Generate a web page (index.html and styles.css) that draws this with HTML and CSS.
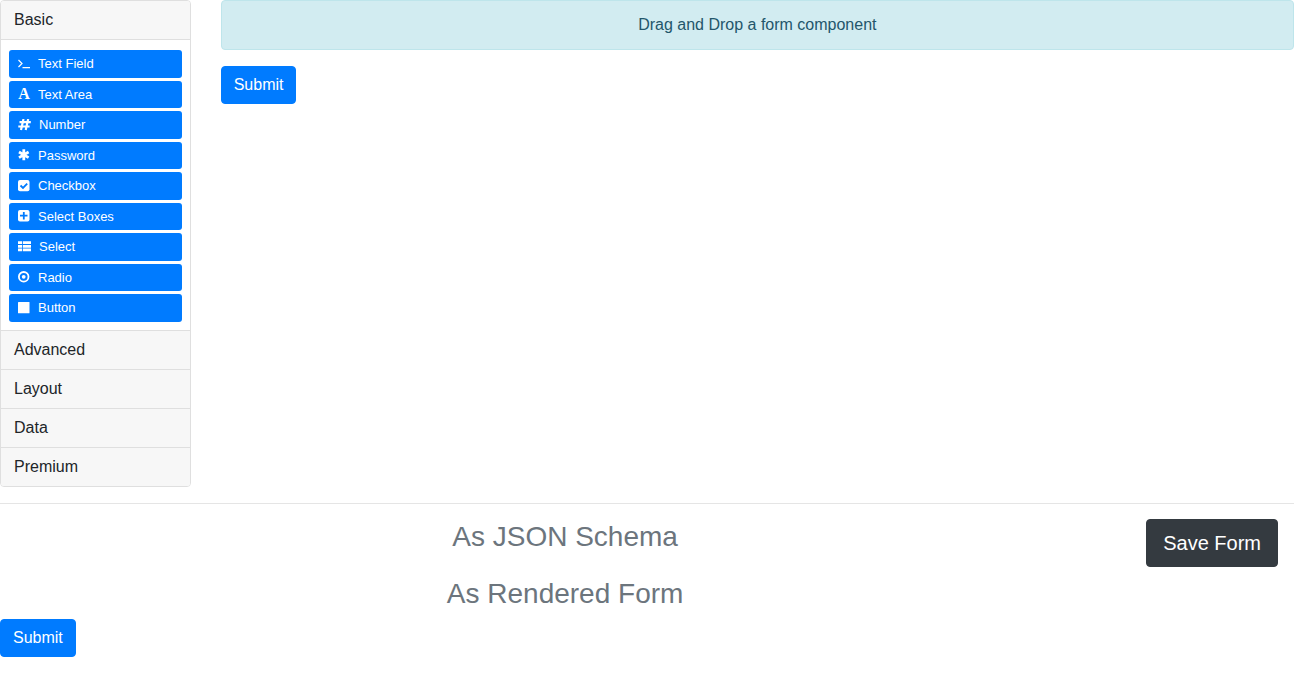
FILE: index.html
```html
<!DOCTYPE html>
<html lang="en">

<head>
	<meta charset="utf-8">
	<meta name="viewport" content="width=device-width, initial-scale=1">
	<title>Form Builder</title>
	<link rel="stylesheet" href="styles.css">
</head>

<body>
	<div class="builder">
		<aside class="sidebar">
			<button type="button" class="group-header">Basic</button>
			<div class="group-body">
				<button type="button" class="component">
					<svg class="icon" viewBox="0 0 12 12"><path d="M.5 2 4 5.500.5 9M4.500 9.700h7.500" fill="none" stroke="currentColor" stroke-width="1.200" /></svg>
					Text Field
				</button>
				<button type="button" class="component"><span class="icon icon-letter" aria-hidden="true">A</span>Text Area</button>
				<button type="button" class="component">
					<svg class="icon icon-wide" viewBox="0 0 13 12"><path d="M5.500 0 3 11M10.200 0 7.700 11M1.500 3.200h11.300M.3 7.500h11.300" fill="none" stroke="currentColor" stroke-width="2.200" /></svg>
					Number
				</button>
				<button type="button" class="component">
					<svg class="icon" viewBox="0 0 12 12"><path d="M5.800.3v11M1 3l9.600 5.600M10.600 3 1 8.600" fill="none" stroke="currentColor" stroke-width="2.800" /></svg>
					Password
				</button>
				<button type="button" class="component">
					<svg class="icon" viewBox="0 0 12 12"><rect width="11.500" height="11.300" rx="2" fill="currentColor" /><path d="m2.500 5.500 2.500 2.500L9.200 3.700" fill="none" stroke="#007bff" stroke-width="1.800" /></svg>
					Checkbox
				</button>
				<button type="button" class="component">
					<svg class="icon" viewBox="0 0 12 12"><rect width="11.500" height="11.500" rx="2" fill="currentColor" /><path d="M5.800 2v7.500M2 5.700h7.500" fill="none" stroke="#007bff" stroke-width="1.800" /></svg>
					Select Boxes
				</button>
				<button type="button" class="component">
					<svg class="icon icon-wide" viewBox="0 0 13 12"><path d="M0 .3h4v2.800H0zM4.800.3H13v2.800H4.800zM0 3.900h4v2.800H0zM4.800 3.900H13v2.800H4.800zM0 7.500h4v2.800H0zM4.800 7.500H13v2.800H4.800z" fill="currentColor" /></svg>
					Select
				</button>
				<button type="button" class="component">
					<svg class="icon" viewBox="0 0 12 12"><circle cx="5.700" cy="5.800" r="4.800" fill="none" stroke="currentColor" stroke-width="1.800" /><circle cx="5.700" cy="5.800" r="1.900" fill="currentColor" /></svg>
					Radio
				</button>
				<button type="button" class="component">
					<svg class="icon" viewBox="0 0 12 12"><rect width="11.500" height="11.300" rx=".5" fill="currentColor" /></svg>
					Button
				</button>
			</div>
			<button type="button" class="group-header">Advanced</button>
			<button type="button" class="group-header">Layout</button>
			<button type="button" class="group-header">Data</button>
			<button type="button" class="group-header">Premium</button>
		</aside>

		<main class="form-area">
			<div class="alert">Drag and Drop a form component</div>
			<button type="submit" class="btn">Submit</button>
		</main>
	</div>

	<hr>

	<section class="output">
		<div class="headings">
			<h3>As JSON Schema</h3>
			<h3>As Rendered Form</h3>
		</div>
		<button type="button" class="btn btn-save">Save Form</button>
	</section>

	<form class="rendered" onsubmit="return false">
		<button type="submit" class="btn">Submit</button>
	</form>
</body>

</html>
```
FILE: styles.css
```css
* {
	box-sizing: border-box;
}

body {
	margin: 0;
	padding-right: 15px;
	background-color: #fff;
	color: #212529;
	font-family: "Liberation Sans", Arial, sans-serif;
	font-size: 16px;
	line-height: 1.5;
}

button {
	font: inherit;
	cursor: pointer;
}

.builder {
	display: grid;
	grid-template-columns: repeat(12, minmax(0, 1fr));
	column-gap: 30px;
	align-items: start;
}

/* Component groups */
.sidebar {
	grid-column: span 2;
	border: 1px solid #dfdfdf;
	border-radius: 4px;
	overflow: hidden;
}

.group-header {
	display: block;
	width: 100%;
	padding: 7px 13px;
	border: 0;
	border-bottom: 1px solid #dfdfdf;
	background-color: #f7f7f7;
	color: #212529;
	text-align: left;
}

.group-header:last-child {
	border-bottom: 0;
}

.group-body {
	display: flex;
	flex-direction: column;
	gap: 3px;
	padding: 10px 8px 8px;
	border-bottom: 1px solid #dfdfdf;
}

.component {
	display: flex;
	align-items: center;
	gap: 8px;
	padding: 4px 9px;
	border: 0;
	border-radius: 3px;
	background-color: #007bff;
	color: #fff;
	font-size: 13px;
	white-space: nowrap;
	cursor: move;
}

.icon {
	flex: none;
	width: 12px;
	height: 12px;
}

.icon-wide {
	width: 13px;
}

.icon-letter {
	font-family: "Liberation Serif", serif;
	font-size: 16px;
	font-weight: bold;
	line-height: 12px;
}

/* Drop area */
.form-area {
	grid-column: span 10;
}

.alert {
	margin-bottom: 16px;
	padding: 12px 20px;
	border: 1px solid #bee5eb;
	border-radius: 4px;
	background-color: #d2ecf1;
	color: #23566b;
	text-align: center;
}

.btn {
	padding: 6px 12px;
	border: 1px solid #007bff;
	border-radius: 4px;
	background-color: #007bff;
	color: #fff;
}

hr {
	margin: 16px 0 15px;
	border: 0;
	border-top: 1px solid #e5e5e5;
}

.output {
	display: flex;
	align-items: flex-start;
}

.headings {
	flex: 1;
	text-align: center;
}

h3 {
	margin: 0 0 21px;
	color: #6c757d;
	font-size: 28px;
	font-weight: normal;
	line-height: 36px;
}

h3:last-child {
	margin-bottom: 7px;
}

.btn-save {
	margin: 0 16px;
	padding: 8px 16px;
	border-color: #343a40;
	background-color: #343a40;
	font-size: 20px;
}
```
